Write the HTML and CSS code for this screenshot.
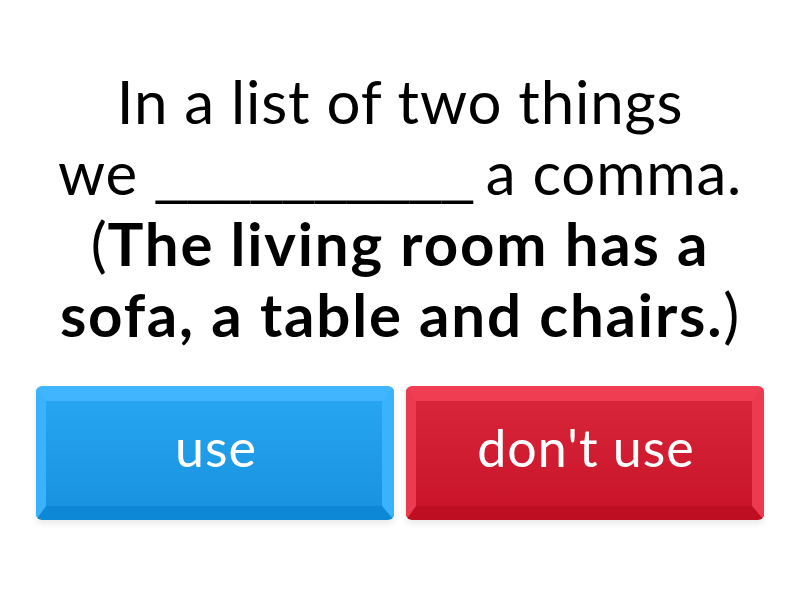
FILE: index.html
```html
<!DOCTYPE html>
<html>
<head>
<meta charset="utf-8">
<link rel="stylesheet" href="styles.css">
</head>
<body>
<div class="screen">
  <div class="question">
    <p class="q-text">In a list of two things<br>we <span class="blank">__________</span> a comma.<br>(<b>The living room has a<br>sofa, a table and chairs.</b>)</p>
  </div>
  <div class="answers">
    <button class="answer blue">use</button>
    <button class="answer red">don't use</button>
  </div>
</div>
</body>
</html>
```
FILE: styles.css
```css
html, body {
  margin: 0;
  padding: 0;
  background: #ffffff;
}
.screen {
  width: 800px;
  height: 600px;
  display: flex;
  flex-direction: column;
  font-family: Lato, "Open Sans", sans-serif;
}
.question {
  height: 386px;
  box-sizing: border-box;
  padding-top: 66px;
}
.q-text {
  margin: 0;
  text-align: center;
  font-size: 60px;
  line-height: 71px;
  letter-spacing: 0.8px;
  color: #000;
}
.blank {
  display: inline-block;
  letter-spacing: -4px;
  margin: 0 40px;
  transform: scaleX(1.35);
}
.q-text b {
  font-weight: 700;
  letter-spacing: 1.8px;
}
.answers {
  display: flex;
  gap: 12px;
  padding: 0 36px;
}
.answer {
  flex: 1;
  height: 134px;
  box-sizing: border-box;
  border-radius: 6px;
  border-style: solid;
  border-width: 15px 12px 14px 10px;
  font-family: Lato, "Open Sans", sans-serif;
  font-size: 52px;
  letter-spacing: 1px;
  color: #fff;
  padding: 0 0 14px 4px;
  box-shadow: 0 4px 6px rgba(0,0,0,0.08);
}
.blue {
  background: linear-gradient(#27a5f0, #1993df);
  border-color: #41b6ff #3bb2fd #0d88d6 #3bb2fd;
}
.red {
  background: linear-gradient(#d92539, #c91429);
  border-color: #f03d52 #ec3a4e #be0e22 #ec3a4e;
}
```
